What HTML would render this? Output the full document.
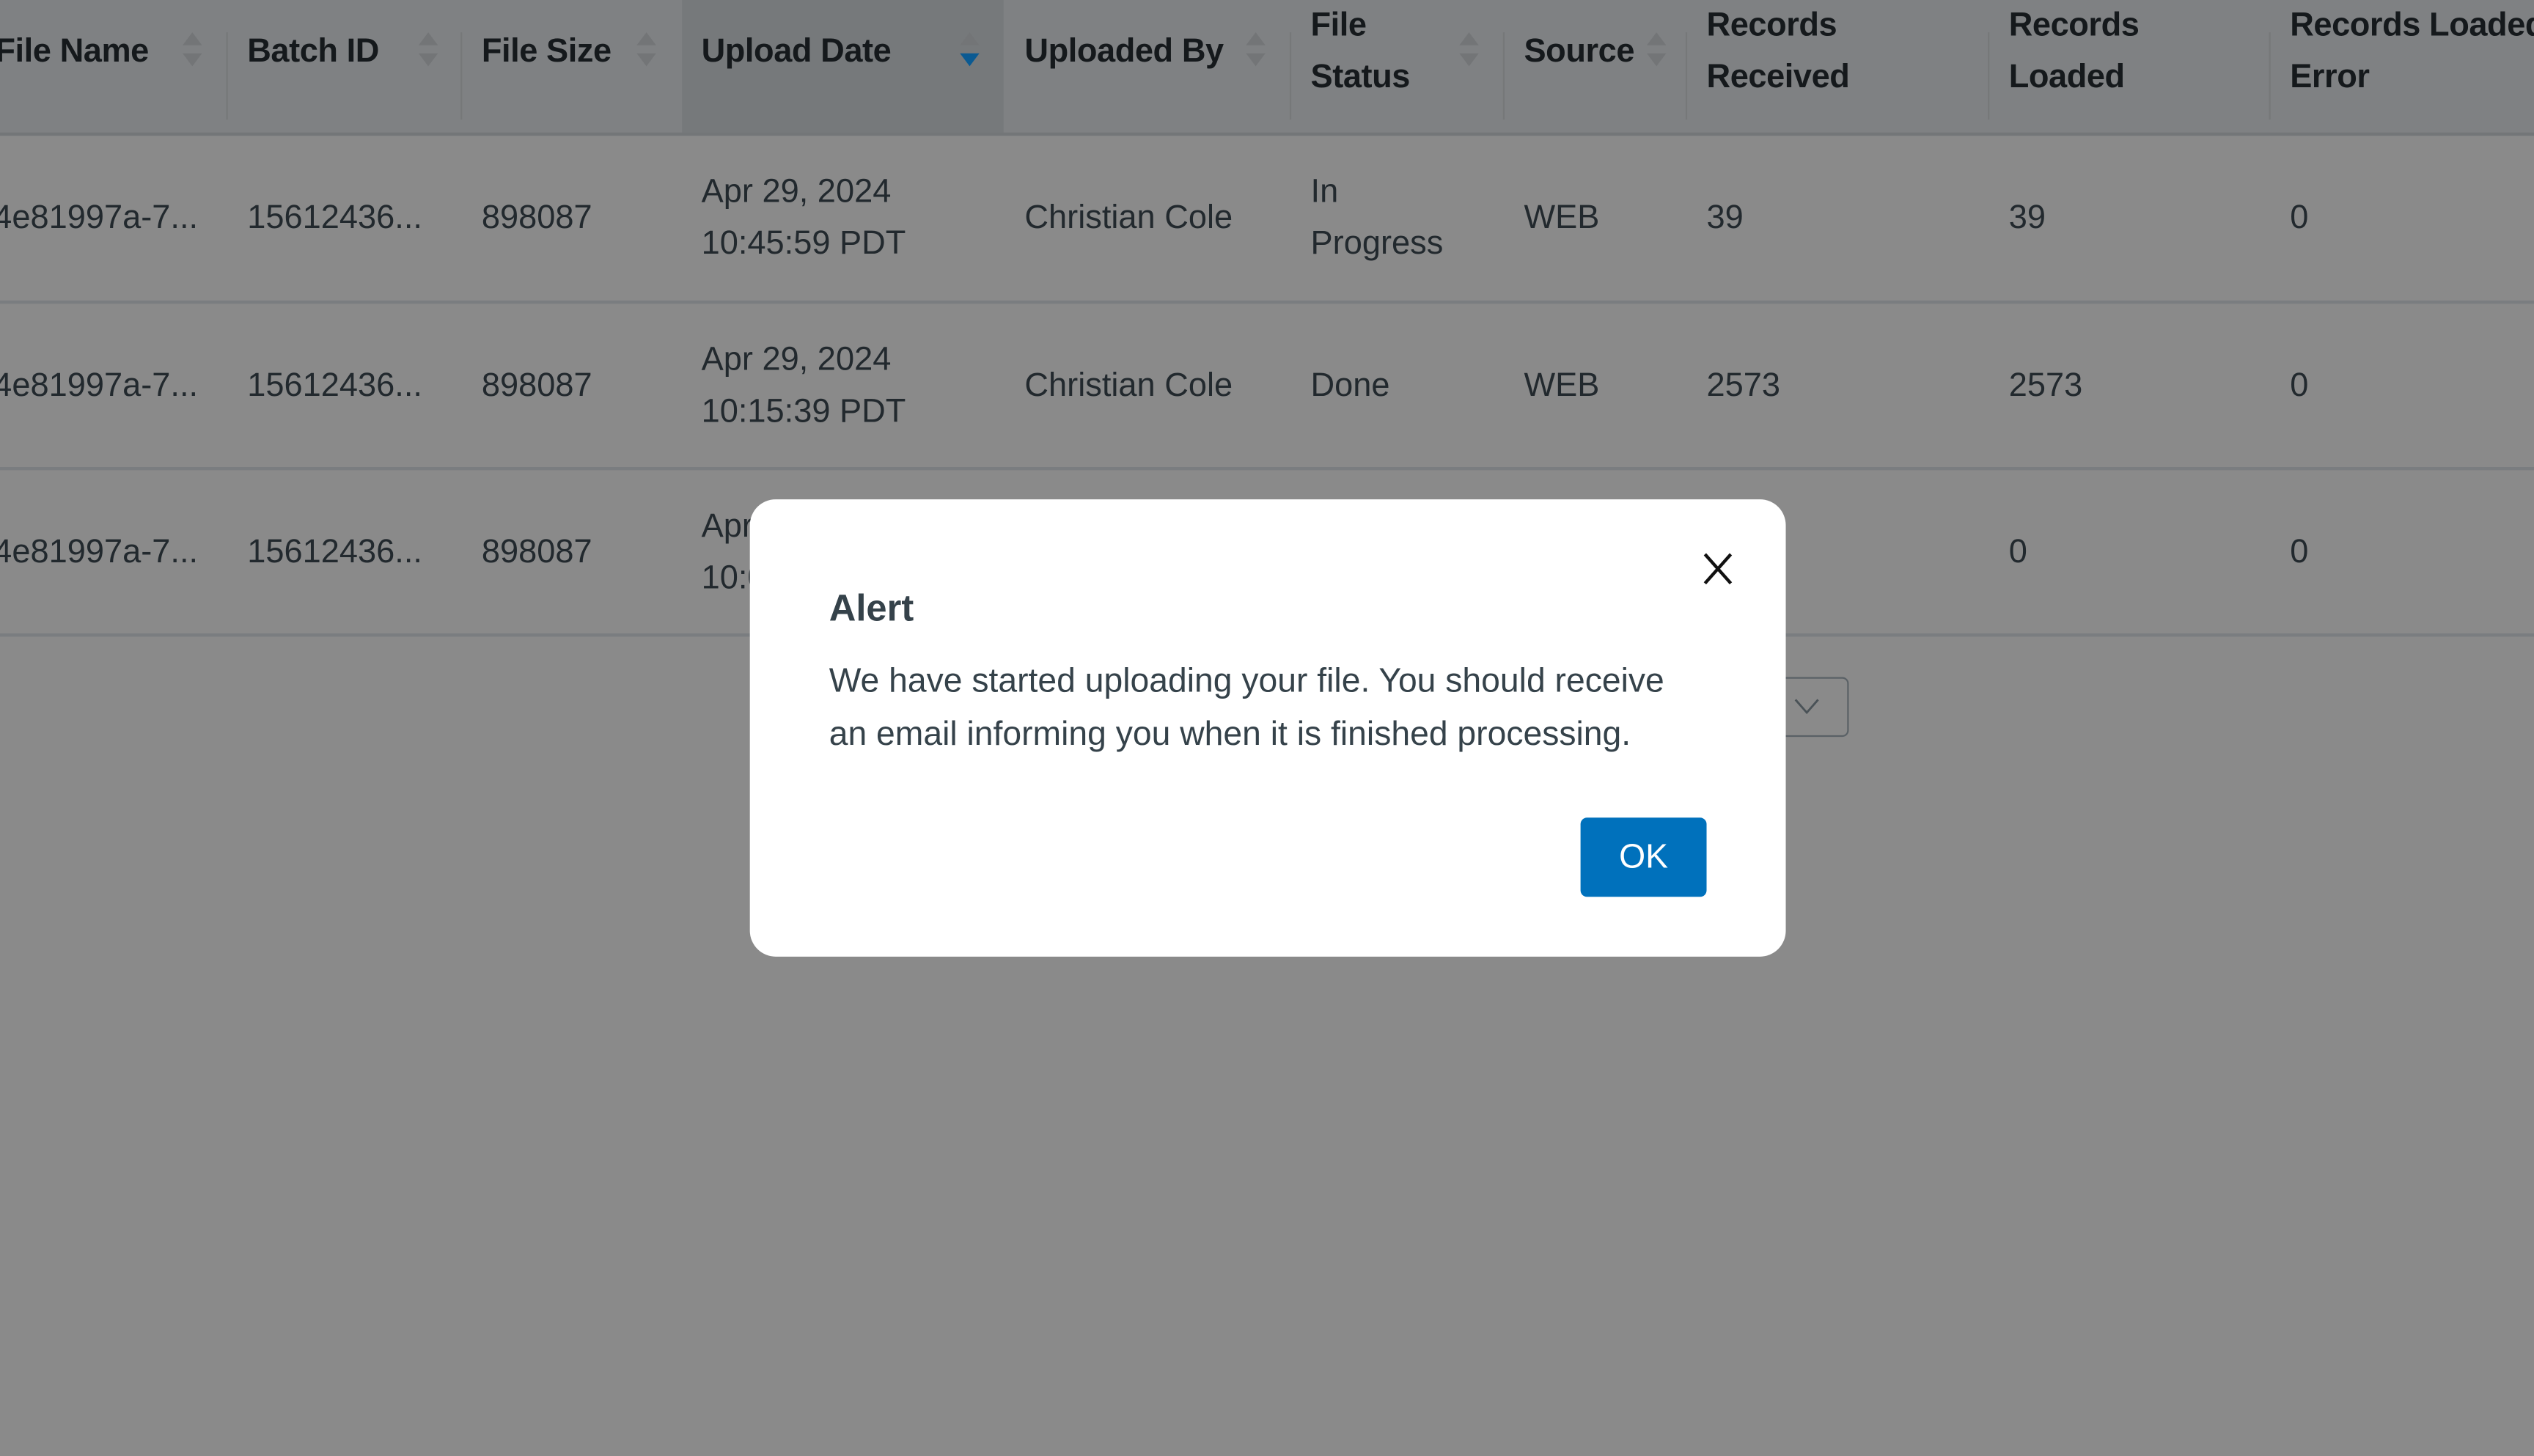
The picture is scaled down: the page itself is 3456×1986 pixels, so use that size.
<!DOCTYPE html>
<html><head><meta charset="utf-8"><style>
html,body{margin:0;padding:0;width:3456px;height:1986px;overflow:hidden;background:#8a8a8a}
#w{position:absolute;left:0;top:0;width:1568px;height:901px;transform:scale(2.2041);transform-origin:0 0;font-family:"Liberation Sans",Arial,sans-serif;color:#22292e;background:#8a8a8a}
.hdr{position:absolute;left:0;top:0;width:1568px;height:82px;background:#7f8183;border-bottom:2px solid #737678}
.ud{position:absolute;left:422px;top:0;width:199px;height:82px;background:#76797b}
.t{position:absolute;font-size:20.5px;line-height:32px;white-space:nowrap;margin-top:1px}
.h{font-weight:bold;font-size:20.5px;color:#15191c;letter-spacing:-0.2px}
.dv{position:absolute;top:20px;width:1px;height:54px;background:#767879}
.line{position:absolute;left:0;width:1568px;height:2px;background:#7a7d80}
.s{position:absolute;width:12px;height:24px}
.s:before{content:"";position:absolute;left:0;top:0;border-left:6px solid transparent;border-right:6px solid transparent;border-bottom:8px solid #737577}
.s:after{content:"";position:absolute;left:0;top:13px;border-left:6px solid transparent;border-right:6px solid transparent;border-top:8px solid #737577}
.s.b:after{border-top-color:#0b5a92}
.modal{position:absolute;left:464px;top:309px;width:641px;height:283px;background:#fff;border-radius:16px}
.ok{position:absolute;left:514px;top:197px;width:78px;height:49px;background:#0071bc;border-radius:4px;color:#fff;font-size:21px;line-height:49px;text-align:center}
</style></head><body><div id="w">
<div class="hdr"></div><div class="ud"></div>
<div class="dv" style="left:140px"></div><div class="dv" style="left:285px"></div><div class="dv" style="left:798px"></div><div class="dv" style="left:930px"></div><div class="dv" style="left:1043px"></div><div class="dv" style="left:1230px"></div><div class="dv" style="left:1404px"></div>
<div class="t h" style="left:-3px;top:15px">File Name</div><div class="s" style="left:113px;top:20px"></div>
<div class="t h" style="left:153px;top:15px">Batch ID</div><div class="s" style="left:259px;top:20px"></div>
<div class="t h" style="left:298px;top:15px">File Size</div><div class="s" style="left:394px;top:20px"></div>
<div class="t h" style="left:434px;top:15px">Upload Date</div><div class="s b" style="left:594px;top:20px"></div>
<div class="t h" style="left:634px;top:15px">Uploaded By</div><div class="s" style="left:771px;top:20px"></div>
<div class="t h" style="left:811px;top:-1px">File<br>Status</div><div class="s" style="left:903px;top:20px"></div>
<div class="t h" style="left:943px;top:15px">Source</div><div class="s" style="left:1019px;top:20px"></div>
<div class="t h" style="left:1056px;top:-1px">Records<br>Received</div>
<div class="t h" style="left:1243px;top:-1px">Records<br>Loaded</div>
<div class="t h" style="left:1417px;top:-1px">Records Loaded<br>Error</div>

<div class="t" style="left:-4px;top:118px">4e81997a-7...</div><div class="t" style="left:153px;top:118px">15612436...</div><div class="t" style="left:298px;top:118px">898087</div>
<div class="t" style="left:434px;top:102px">Apr 29, 2024<br>10:45:59 PDT</div><div class="t" style="left:634px;top:118px">Christian Cole</div>
<div class="t" style="left:811px;top:102px">In<br>Progress</div><div class="t" style="left:943px;top:118px">WEB</div><div class="t" style="left:1056px;top:118px">39</div><div class="t" style="left:1243px;top:118px">39</div><div class="t" style="left:1417px;top:118px">0</div>
<div class="line" style="top:186px"></div>
<div class="t" style="left:-4px;top:222px">4e81997a-7...</div><div class="t" style="left:153px;top:222px">15612436...</div><div class="t" style="left:298px;top:222px">898087</div>
<div class="t" style="left:434px;top:206px">Apr 29, 2024<br>10:15:39 PDT</div><div class="t" style="left:634px;top:222px">Christian Cole</div>
<div class="t" style="left:811px;top:222px">Done</div><div class="t" style="left:943px;top:222px">WEB</div><div class="t" style="left:1056px;top:222px">2573</div><div class="t" style="left:1243px;top:222px">2573</div><div class="t" style="left:1417px;top:222px">0</div>
<div class="line" style="top:289px"></div>
<div class="t" style="left:-4px;top:325px">4e81997a-7...</div><div class="t" style="left:153px;top:325px">15612436...</div><div class="t" style="left:298px;top:325px">898087</div>
<div class="t" style="left:434px;top:309px">Apr 29, 2024<br>10:05:12 PDT</div>
<div class="t" style="left:1243px;top:325px">0</div><div class="t" style="left:1417px;top:325px">0</div>
<div class="line" style="top:392px"></div>
<div style="position:absolute;left:1060px;top:419px;width:82px;height:35px;border:1.5px solid #5a6166;border-radius:4px"></div>
<svg style="position:absolute;left:1110px;top:431px" width="16" height="12"><path d="M1 2 L8 10 L15 2" fill="none" stroke="#4a5257" stroke-width="1.3"/></svg>

<div class="modal">
<svg style="position:absolute;left:589px;top:32px" width="20" height="22"><path d="M2 2 L18 20 M18 2 L2 20" stroke="#111" stroke-width="2"/></svg>
<div class="t" style="left:49px;top:50px;font-weight:bold;font-size:23px;color:#35424a">Alert</div>
<div class="t" style="left:49px;top:95px;font-size:21px;line-height:33px;color:#35424a">We have started uploading your file. You should receive<br>an email informing you when it is finished processing.</div>
<div class="ok">OK</div>
</div>
</div></body></html>
